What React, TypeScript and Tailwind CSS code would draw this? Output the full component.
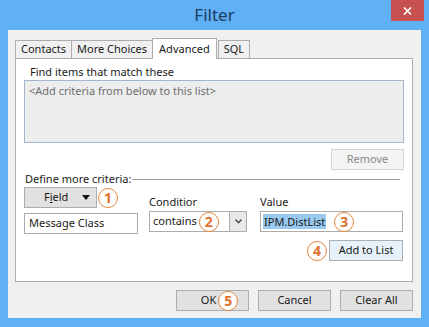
import React from 'react';

const font = { fontFamily: '"Noto Sans", "Open Sans", sans-serif' };

function Num({ n }: { n: number }) {
  return (
    <span className="inline-flex items-center justify-center w-[20px] h-[20px] rounded-full border-[1.5px] border-[#e2873f] bg-white text-[#e0702a] text-[14px] font-bold leading-none shrink-0">
      {n}
    </span>
  );
}

function Tab({ label, active }: { label: string; active?: boolean }) {
  if (active) {
    return (
      <div className="h-[21px] px-[6px] -mb-px bg-white border border-b-0 border-[#acacac] flex items-center text-[11px] text-[#1a1a1a] z-10">
        {label}
      </div>
    );
  }
  return (
    <div className="h-[18px] px-[5px] bg-[#f0f0f0] border border-b-0 border-[#acacac] -mr-px flex items-center text-[11px] text-[#1a1a1a]">
      {label}
    </div>
  );
}

function Btn({ children, className = '' }: { children: React.ReactNode; className?: string }) {
  return (
    <div className={`h-[21px] bg-[#e1e1e1] border border-[#adadad] flex items-center text-[11px] text-[#1a1a1a] ${className}`}>
      {children}
    </div>
  );
}

export default function App() {
  return (
    <div className="w-[429px] h-[327px] bg-[#5fb0f4] flex flex-col px-[8px] pb-[9px] overflow-hidden" style={font}>
      <div className="h-[30px] relative flex items-center justify-center shrink-0">
        <span className="text-[17px] text-[#1d3b63] -mt-[1px]">Filter</span>
        <div className="absolute right-[-3px] top-0 w-[33px] h-[21px] bg-[#c75050] flex items-center justify-center">
          <svg width="9" height="8" viewBox="0 0 9 8">
            <path d="M1 0.5 L8 7.5 M8 0.5 L1 7.5" stroke="white" strokeWidth="1.6" />
          </svg>
        </div>
      </div>

      <div className="flex-1 bg-[#f0f0f0] flex flex-col pl-[7px] pr-[8px] pt-[8px]">
        <div className="flex items-end h-[20px]">
          <Tab label="Contacts" />
          <Tab label="More Choices" />
          <Tab label="Advanced" active />
          <div className="ml-px">
            <Tab label="SQL" />
          </div>
        </div>

        <div className="h-[224px] bg-white border border-[#acacac] flex flex-col px-[8px] pt-[4px]">
          <div className="text-[11px] text-[#1a1a1a] pl-[6px] h-[17px] leading-[17px]">Find items that match these</div>
          <div className="h-[63px] bg-[#ededed] border border-[#a4b6c9] px-[4px] pt-[2px] text-[11px] text-[#6d6d6d]">
            &lt;Add criteria from below to this list&gt;
          </div>
          <div className="flex justify-end mt-[6px]">
            <Btn className="w-[73px] h-[19px] justify-center bg-[#f4f4f4] border-[#d5d5d5] text-[#8a8a8a]">Remove</Btn>
          </div>
          <div className="flex items-center mt-[2px] h-[14px]">
            <span className="text-[11px] text-[#1a1a1a] pl-[1px]">Define more criteria:</span>
            <div className="flex-1 h-px bg-[#a0a0a0] ml-[1px] mr-[4px]" />
          </div>

          <div className="flex items-start mt-[1px]">
            <div className="flex flex-col">
              <div className="flex items-center gap-[1px]">
                <Btn className="w-[73px] h-[19px] pl-[19px] pr-[6px]">
                  <span>
                    F<span className="underline">i</span>eld
                  </span>
                  <svg className="ml-auto" width="8" height="5" viewBox="0 0 8 5">
                    <path d="M0 0 H8 L4 5 Z" fill="#111" />
                  </svg>
                </Btn>
                <Num n={1} />
              </div>
              <div className="mt-[5px] w-[114px] h-[21px] bg-white border border-[#acacac] flex items-center px-[4px] text-[11px] text-[#1a1a1a]">
                Message Class
              </div>
            </div>

            <div className="flex flex-col ml-[11px] mt-[7px]">
              <div className="text-[11px] text-[#1a1a1a] h-[16px] leading-[16px]">Conditior</div>
              <div className="mt-[1px] w-[98px] h-[21px] bg-white border border-[#acacac] flex items-center pl-[3px] text-[11px] text-[#1a1a1a]">
                <span>contains</span>
                <span className="ml-[2px]">
                  <Num n={2} />
                </span>
                <div className="ml-auto w-[17px] h-[19px] bg-[#e8e8e8] border-l border-[#acacac] flex items-center justify-center">
                  <svg width="7" height="5" viewBox="0 0 7 5">
                    <path d="M0.5 0.5 L3.5 3.8 L6.5 0.5" stroke="#444" strokeWidth="1.3" fill="none" />
                  </svg>
                </div>
              </div>
            </div>

            <div className="flex flex-col ml-[13px] mt-[7px] flex-1 mr-[1px]">
              <div className="text-[11px] text-[#1a1a1a] h-[16px] leading-[16px]">Value</div>
              <div className="mt-[1px] h-[21px] bg-white border border-[#acacac] flex items-center pl-[2px] text-[11px] text-[#1a1a1a]">
                <span className="bg-[#99c9ef] px-[1px] leading-[15px]">IPM.DistList</span>
                <span className="ml-[8px]">
                  <Num n={3} />
                </span>
              </div>
            </div>
          </div>

          <div className="flex justify-end items-center mt-[6px] mr-[1px] gap-[2px]">
            <Num n={4} />
            <Btn className="w-[74px] h-[21px] justify-center bg-[#e5f1fb] border-[#3c8ed6]">Add to List</Btn>
          </div>
        </div>

        <div className="flex justify-end gap-[9px] mt-[8px]">
          <Btn className="w-[73px] justify-center pl-[14px]">
            <span>OK</span>
            <span className="ml-[2px]">
              <Num n={5} />
            </span>
          </Btn>
          <Btn className="w-[73px] justify-center">Cancel</Btn>
          <Btn className="w-[73px] justify-center">Clear All</Btn>
        </div>
      </div>
    </div>
  );
}
